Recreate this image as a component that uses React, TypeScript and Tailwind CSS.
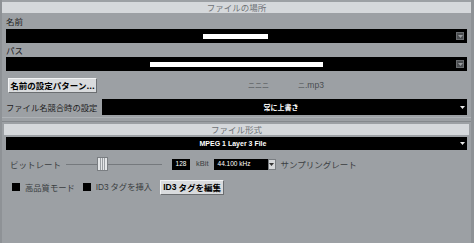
import React from "react";

const jp = { fontFamily: '"Noto Sans CJK JP", "Noto Sans", sans-serif' };
const lat = { fontFamily: '"Liberation Sans", Arial, sans-serif' };

function BoxArrow() {
  return (
    <div className="w-[8px] h-[8px] bg-[#4a4d50] border border-[#6a6d70] flex items-center justify-center">
      <svg width="5" height="3" viewBox="0 0 5 3"><path d="M0 0H5L2.5 3Z" fill="#9a9da0" /></svg>
    </div>
  );
}

function TinyArrow() {
  return (
    <svg width="5" height="3" viewBox="0 0 5 3"><path d="M0 0H5L2.5 3Z" fill="#e8e8e8" /></svg>
  );
}

function Header({ title }: { title: string }) {
  return (
    <div className="h-[11px] bg-[#d5d8db] flex items-center justify-center text-[8.5px] leading-none text-[#6e7276]" style={jp}>
      {title}
    </div>
  );
}

export default function App() {
  return (
    <div className="w-[474px] h-[243px] bg-[#9ca0a4] overflow-hidden flex flex-col border-l-[2px] border-r-[3px] border-[#8e9296] text-[#1e2022]" style={jp}>
      <div className="pt-[2px] flex flex-col">
        <Header title="ファイルの場所" />
        <div className="px-[4px] flex flex-col">
          <div className="h-[16px] flex items-center text-[8.5px] leading-none pt-[1px]">名前</div>
          <div className="h-[14px] bg-black flex items-center">
            <div className="ml-[197px] w-[65px] h-[5px] bg-white" />
            <div className="flex-1" />
            <div className="mr-[3px]"><BoxArrow /></div>
          </div>
          <div className="h-[14px] flex items-center text-[8.5px] leading-none pt-[1px]">パス</div>
          <div className="h-[14px] bg-black flex items-center">
            <div className="ml-[144px] w-[173px] h-[5px] bg-white" />
            <div className="flex-1" />
            <div className="mr-[3px]"><BoxArrow /></div>
          </div>
          <div className="h-[28px] flex items-center">
            <div className="ml-[2px] w-[89px] h-[15px] bg-[#d9dbdd] border border-[#f2f3f4] border-b-[#6b6e71] border-r-[#6b6e71] flex items-center justify-center text-[8.5px] font-bold leading-none text-black">
              名前の設定パターン...
            </div>
            <div className="ml-[151px] text-[7px] leading-none text-[#4a4d50]">ニニニ</div>
            <div className="ml-[29px] text-[8.5px] leading-none text-[#4a4d50]" style={lat}>
              <span style={jp} className="text-[7px]">ニ</span>.mp3
            </div>
          </div>
          <div className="h-[16px] flex items-center">
            <div className="w-[96px] text-[8.3px] leading-none">ファイル名競合時の設定</div>
            <div className="flex-1 h-[16px] bg-black flex items-center">
              <div className="flex-1 text-center text-white text-[7px] font-bold leading-none">常に上書き</div>
              <div className="mr-[2px] flex items-center"><TinyArrow /></div>
            </div>
          </div>
        </div>
      </div>
      <div className="mt-[2px] h-[1px] bg-[#aeb2b6]" />
      <div className="mt-[3px] h-[1px] bg-[#84888c]" />
      <div className="pt-[2px] px-[2px] flex flex-col">
        <Header title="ファイル形式" />
        <div className="px-[2px] flex flex-col">
          <div className="mt-[2px] h-[13px] bg-black flex items-center">
            <div className="flex-1 text-center text-white text-[7px] font-bold leading-none" style={lat}>MPEG 1 Layer 3 File</div>
            <div className="mr-[2px] flex items-center"><TinyArrow /></div>
          </div>
          <div className="h-[28px] flex items-center">
            <div className="ml-[4px] w-[56px] text-[8.5px] leading-none text-[#3a3d40]">ビットレート</div>
            <div className="relative w-[96px] h-[16px] flex items-center">
              <div className="w-full h-[1px] bg-[#75797d]" />
              <div className="absolute left-[31px] top-[1px] w-[11px] h-[14px] bg-[#e4e6e8] border border-[#7a7e82] flex justify-center gap-[1px] px-[1px]">
                <div className="w-[1px] h-full bg-[#9a9ea2]" />
                <div className="w-[1px] h-full bg-[#9a9ea2]" />
                <div className="w-[1px] h-full bg-[#9a9ea2]" />
              </div>
            </div>
            <div className="ml-[10px] w-[18px] h-[11px] bg-black flex items-center justify-center text-white text-[6.5px] leading-none" style={lat}>128</div>
            <div className="ml-[6px] text-[7.5px] leading-none text-[#3a3d40]" style={lat}>kBit</div>
            <div className="ml-[5px] w-[54px] h-[11px] bg-black flex items-center pl-[4px] text-white text-[6.5px] leading-none" style={lat}>44.100 kHz</div>
            <div className="w-[8px] h-[11px] bg-[#d6d8da] border border-[#7a7e82] flex items-center justify-center">
              <svg width="5" height="3" viewBox="0 0 5 3"><path d="M0 0H5L2.5 3Z" fill="#333" /></svg>
            </div>
            <div className="ml-[5px] text-[8.5px] leading-none text-[#3a3d40]">サンプリングレート</div>
          </div>
          <div className="h-[18px] flex items-center">
            <div className="ml-[6px] w-[8px] h-[8px] bg-black" />
            <div className="ml-[5px] text-[8.3px] leading-none text-[#3a3d40]">高品質モード</div>
            <div className="ml-[8px] w-[8px] h-[8px] bg-black" />
            <div className="ml-[5px] text-[8.3px] leading-none text-[#3a3d40]">
              <span style={lat}>ID3</span> タグを挿入
            </div>
            <div className="ml-[8px] w-[64px] h-[15px] bg-[#d9dbdd] border border-[#f2f3f4] border-b-[#6b6e71] border-r-[#6b6e71] flex items-center justify-center text-[8.5px] font-bold leading-none text-black">
              <span style={lat}>ID3</span>&nbsp;タグを編集
            </div>
          </div>
        </div>
      </div>
    </div>
  );
}
